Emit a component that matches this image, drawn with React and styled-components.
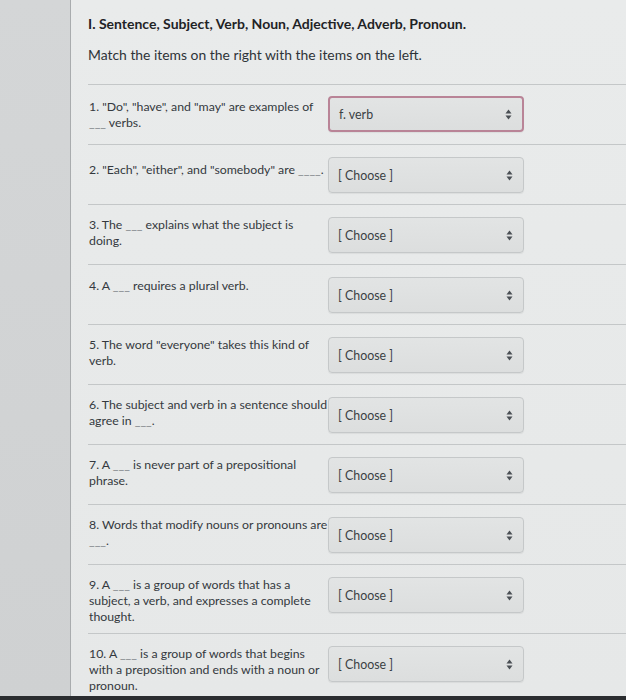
import React from "react";
import styled, { createGlobalStyle } from "styled-components";

const GlobalStyle = createGlobalStyle`
  html, body {
    margin: 0;
    padding: 0;
    background: #d2d4d5;
  }
  body {
    font-family: Lato, "Open Sans", "Liberation Sans", sans-serif;
  }
`;

const Page = styled.div`
  display: flex;
  width: 626px;
  height: 700px;
  overflow: hidden;
  background: #d2d4d5;
  border-bottom: 4px solid #2b2d30;
  box-sizing: border-box;
`;

const Gutter = styled.div`
  width: 70px;
  flex-shrink: 0;
  background: linear-gradient(180deg, #d4d6d7 0%, #cfd1d2 100%);
  border-right: 1px solid #a9acae;
`;

const Card = styled.div`
  flex: 1;
  background: linear-gradient(180deg, #e9ebeb 0%, #e6e8e8 100%);
  padding: 14px 0 0 17px;
  color: #34393e;
`;

const Title = styled.h2`
  margin: 0;
  font-size: 14px;
  line-height: 20px;
  font-weight: 700;
  color: #1f2326;
`;

const Subtitle = styled.p`
  margin: 11px 0 0;
  font-size: 13.9px;
  line-height: 20px;
  color: #2e3338;
`;

const List = styled.div`
  margin-top: 19px;
  border-top: 1px solid #c4c7c8;
`;

const Row = styled.div`
  display: flex;
  align-items: flex-start;
  padding: 12px 0 8px 1px;
  min-height: 39px;
  border-bottom: 1px solid #c4c7c8;
`;

const Question = styled.div`
  width: 239px;
  flex-shrink: 0;
  padding-top: ${(p) => p.$offset}px;
  font-size: 12.3px;
  line-height: 16px;
  color: #34393e;
`;

const Blank = styled.span`
  color: #7a7f84;
`;

const Select = styled.div`
  display: flex;
  align-items: center;
  justify-content: space-between;
  box-sizing: border-box;
  width: 196px;
  height: 36px;
  padding: 0 10px 0 9px;
  margin-top: ${(p) => (p.$focused ? -1 : 0)}px;
  border: ${(p) => (p.$focused ? "2px solid #b98497" : "1px solid #c5c8c9")};
  border-radius: 4px;
  background: linear-gradient(180deg, #e2e4e4 0%, #dcdede 100%);
  box-shadow: 0 1px 1px rgba(0, 0, 0, 0.06);
  font-size: 12.4px;
  color: #3a3f44;
`;

const Arrows = () => (
  <svg width="7" height="11" viewBox="0 0 7 11">
    <path d="M3.5 0.5 L6.5 4.5 L0.5 4.5 Z" fill="#4a4f54" />
    <path d="M0.5 6.5 L6.5 6.5 L3.5 10.5 Z" fill="#4a4f54" />
  </svg>
);

const B = ({ n = 3 }) => <Blank>{"_".repeat(n)}</Blank>;

const items = [
  {
    text: <>1. "Do", "have", and "may" are examples of <B /> verbs.</>,
    value: "f. verb",
    focused: true,
    offset: 2,
  },
  {
    text: <>2. "Each", "either", and "somebody" are <B n={4} />.</>,
    offset: 5,
  },
  { text: <>3. The <B /> explains what the subject is doing.</>, offset: 0 },
  { text: <>4. A <B /> requires a plural verb.</>, offset: 1 },
  { text: <>5. The word "everyone" takes this kind of verb.</>, offset: 0 },
  { text: <>6. The subject and verb in a sentence should agree in <B />.</>, offset: 0 },
  { text: <>7. A <B /> is never part of a prepositional phrase.</>, offset: 0 },
  { text: <>8. Words that modify nouns or pronouns are <B />.</>, offset: 0 },
  {
    text: <>9. A <B /> is a group of words that has a subject, a verb, and expresses a complete thought.</>,
    offset: 0,
  },
  {
    text: <>10. A <B /> is a group of words that begins with a preposition and ends with a noun or pronoun.</>,
    offset: 0,
  },
];

export default function App() {
  return (
    <>
      <GlobalStyle />
      <Page>
        <Gutter />
        <Card>
          <Title>I. Sentence, Subject, Verb, Noun, Adjective, Adverb, Pronoun.</Title>
          <Subtitle>Match the items on the right with the items on the left.</Subtitle>
          <List>
            {items.map((item, i) => (
              <Row key={i}>
                <Question $offset={item.offset}>{item.text}</Question>
                <Select $focused={item.focused}>
                  <span>{item.value || "[ Choose ]"}</span>
                  <Arrows />
                </Select>
              </Row>
            ))}
          </List>
        </Card>
      </Page>
    </>
  );
}
